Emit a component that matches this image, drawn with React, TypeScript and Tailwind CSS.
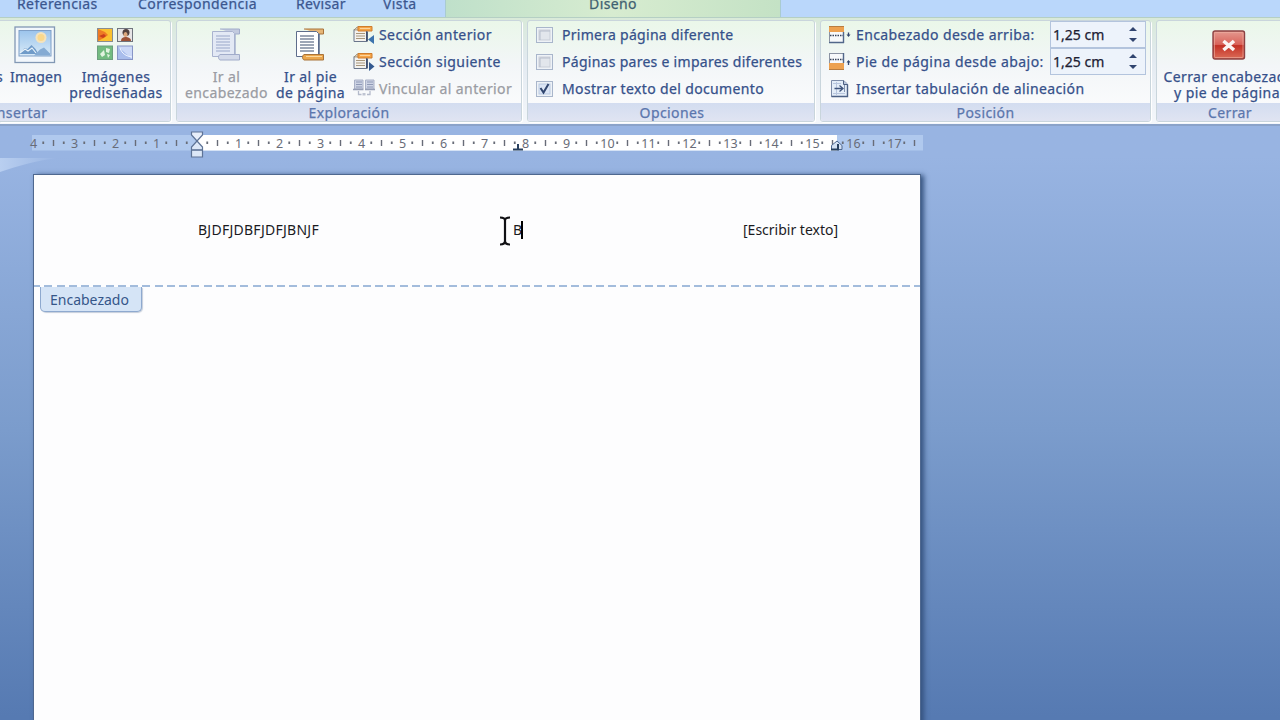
import type { ReactNode } from "react";

const UNIT = 41;
const ORIGIN = 165;

function PictureIcon() {
  return (
    <svg width="42" height="38" viewBox="0 0 42 38" fill="none" className="mr-[2px]">
      <defs>
        <linearGradient id="sky" x1="0" y1="0" x2="0" y2="1">
          <stop offset="0" stopColor="#9cc4ec" />
          <stop offset="1" stopColor="#d9ebf8" />
        </linearGradient>
      </defs>
      <rect x="1" y="1" width="39.5" height="35.5" fill="#f2f7fc" stroke="#8298b4" strokeWidth="1.3" />
      <rect x="5" y="4.5" width="32" height="25.5" fill="url(#sky)" stroke="#7f9fc6" />
      <circle cx="27" cy="11.5" r="5.5" fill="#f4e3bd" />
      <circle cx="27" cy="11.5" r="3.5" fill="#f9d88c" />
      <path d="M5.500 28l5-6 3 1 4-4 4 4 3 5z" fill="#6f9bc9" />
      <path d="M20 29.500l6-6 4-2 3 3 3 3v2z" fill="#85abd3" />
      <path d="M6 27l5-4 3 2 4-3 4 5" stroke="#e8f2fa" strokeWidth="1.200" />
    </svg>
  );
}

function ClipArtIcon() {
  return (
    <svg width="38" height="36" viewBox="0 0 38 36" fill="none" className="mr-[2px]">
      <rect x="1.500" y="1.500" width="15" height="13" fill="#fbc02f" stroke="#8a8d90" />
      <path d="M2 2l7 3 3 3-4 3-6 3z" fill="#ee7b24" />
      <path d="M3 9l5-2 2 2-3 2z" fill="#c93f1c" />
      <rect x="21.500" y="1.500" width="15" height="13" fill="#e7e5e6" stroke="#70757e" />
      <circle cx="30" cy="5.500" r="3.500" fill="#51413e" />
      <ellipse cx="29.500" cy="7.500" rx="2" ry="2.500" fill="#dca77c" />
      <path d="M25 14c0-3 2-4 4.500-4s5.500 1 5.500 4z" fill="#9b5237" />
      <rect x="1.500" y="19" width="15" height="13.500" fill="#73bb80" stroke="#6c9f7d" />
      <path d="M4 27l4-4 1 5-3 2zM10 21l4 1-1 4-3-1zM11 27l3 1-2 3z" fill="#e2f3df" />
      <rect x="21.500" y="19" width="15" height="13.500" fill="#ccd9f7" stroke="#8795c6" />
      <path d="M22 19.500l14 12.500H22z" fill="#a9bdec" />
      <path d="M24 21c2 6 6 8 12 9" stroke="#f0f5ff" />
    </svg>
  );
}

function ScrollIcon({ disabled = false }: { disabled?: boolean }) {
  const paper = disabled ? "#e3e9f5" : "#ffffff";
  const edge = disabled ? "#a9b3cf" : "#5e6d8b";
  const line = disabled ? "#b3bdd8" : "#7d899f";
  const roll = disabled ? "#c3cbdf" : "#eba64c";
  const rollEdge = disabled ? "#a1acca" : "#a8733a";
  return (
    <svg width="32" height="36" viewBox="0 0 32 36" fill="none">
      <path d="M9 2h19.500v5H24" fill={disabled ? roll : "#e6b677"} stroke={rollEdge} />
      <path d="M1.500 4.500h20l2 2v23h-22z" fill={paper} stroke={edge} />
      <path d="M24 7v21" stroke={edge} strokeWidth="1.500" />
      <path d="M5 9h14M5 12h14M5 15h14M5 18h14M5 21h14M5 24h14" stroke={line} strokeWidth="1.300" />
      <path d="M9 27.500h19.500v5.500H9c-2-1-2-4.500 0-5.500z" fill={disabled ? "#d3daea" : roll} stroke={rollEdge} />
      {!disabled && <path d="M11 29.500h16" stroke="#fbd79d" />}
    </svg>
  );
}

function SectionIcon({ direction }: { direction: "prev" | "next" }) {
  return (
    <svg width="22" height="20" viewBox="0 0 22 20" fill="none">
      <path d="M1 4.500h12.500v12H1z" fill="#f4f2ee" stroke="#69758b" />
      <path d="M3 8.500h9M3 11h9M3 13.500h9" stroke="#a8967c" />
      <path d="M1 5l3-3h4v3z" fill="#d8c7ae" stroke="#8c8576" strokeWidth="0.700" />
      <path d="M5 1.500h14v4.500H5z" fill="#f5a548" stroke="#cf7d2d" />
      <path d="M7 3.500h10" stroke="#fcd39b" />
      <path d="M14 6.500v10" stroke="#3f4e6e" strokeWidth="1.800" />
      {direction === "prev" ? (
        <path d="M21 10v9l-6-4.500z" fill="#3c73ad" />
      ) : (
        <path d="M16 10v9l5.500-4.500z" fill="#33598f" />
      )}
    </svg>
  );
}

function LinkIcon() {
  return (
    <svg width="23" height="19" viewBox="0 0 23 19" fill="none">
      <path d="M1.500 1h8.500v9H1.500zM12.500 1H21v9h-8.500z" fill="#cdd3e4" stroke="#a9b0c6" />
      <path d="M3 3h6M3 5.500h6M3 8h6M14 3h6M14 5.500h6M14 8h6" stroke="#8f99b6" />
      <path d="M0 10.500h10.500M12 10.500h10" stroke="#959db5" strokeWidth="1.500" />
      <path d="M5.500 12v3.500h3M17 12v3.500h-3" stroke="#b4bacb" strokeWidth="1.300" />
      <path d="M9.500 14h3v2.500h-3z" fill="#bfc4d2" />
    </svg>
  );
}

function MarginIcon({ edge }: { edge: "top" | "bottom" }) {
  const top = edge === "top";
  return (
    <svg width="23" height="19" viewBox="0 0 23 19" fill="none" className="-ml-px">
      <rect x="0.500" y="1.500" width="14" height="16" fill="#f7f9fb" stroke="#8b93a3" />
      <rect x="0" y={top ? 1 : 11} width="15" height={top ? 6 : 7} fill="#eda150" />
      <path d={top ? "M0 1.500h15" : "M0 17.500h15"} stroke="#b97c3f" />
      <path d={top ? "M1 10.500h13" : "M1 7.500h13"} stroke="#38445b" strokeWidth="1.400" strokeDasharray="1.500 1" />
      <path d={top ? "M0 17.500h15M14.500 7v11" : "M14.500 1v10"} stroke="#52678a" strokeWidth="1.400" />
      <path d={top ? "M0.500 7v10" : "M0.500 1v10"} stroke="#8b93a3" />
      <path d={top ? "M19.500 7.500v3" : "M19.500 9v4"} stroke="#33476e" strokeWidth="1.300" />
      <path d={top ? "M17.500 9.500h4l-2 2.500z" : "M17.500 10.500h4l-2-2.500z"} fill="#33476e" />
    </svg>
  );
}

function AlignTabIcon() {
  return (
    <svg width="19" height="19" viewBox="0 0 19 19" fill="none">
      <path d="M1.500 1.500h12l4 3.500v12.500h-16z" fill="#e4edf8" stroke="#7d8ca8" />
      <path d="M13.500 1.500v4h4" fill="#b8c6dd" stroke="#4d5f80" />
      <path d="M1.500 17.500h16v-12" stroke="#4c6185" strokeWidth="1.400" />
      <path d="M3 4.500h8M3 14.500h12M6.500 3v13" stroke="#b8c6de" />
      <path d="M4.500 9.500h8M9.500 6.500l3.500 3-3.500 3" stroke="#3f547c" strokeWidth="1.300" />
      <path d="M14.500 6v7" stroke="#8494b0" />
    </svg>
  );
}

function CloseIcon() {
  return (
    <svg width="34" height="30" viewBox="0 0 34 30" fill="none">
      <defs>
        <linearGradient id="closeRed" x1="0" y1="0" x2="0" y2="1">
          <stop offset="0" stopColor="#e59a90" />
          <stop offset="0.480" stopColor="#d9635a" />
          <stop offset="0.520" stopColor="#c33126" />
          <stop offset="1" stopColor="#dc6d58" />
        </linearGradient>
      </defs>
      <rect x="1" y="1" width="31.500" height="28" rx="2" fill="url(#closeRed)" stroke="#8c4142" strokeWidth="1.400" />
      <rect x="2.500" y="2.500" width="28.500" height="25" rx="1" stroke="#eeb0a4" strokeOpacity="0.600" />
      <path d="M11.500 11l10.500 9M22 11l-10.500 9" stroke="#fbf4f3" strokeWidth="3.600" />
    </svg>
  );
}

function Group({ title, className, children }: { title: string; className: string; children: ReactNode }) {
  return (
    <section
      className={`flex h-[102px] shrink-0 flex-col overflow-hidden rounded-[3px] border border-[#c9d5dc] bg-linear-to-b from-[#eaf7e9] via-[#f3f6f8] via-45% to-[#fdfdfe] shadow-[1px_1px_0_#fff] ${className}`}
    >
      <div className="flex h-[82px] shrink-0">{children}</div>
      <h2 className="flex h-[18px] items-center justify-center bg-linear-to-b from-[#d3ddf0] to-[#e0e4f2] text-[14px] tracking-[0.4px] text-[#5b76ad]">
        {title}
      </h2>
    </section>
  );
}

function BigButton({ icon, lines, className }: { icon: ReactNode; lines: string[]; className: string }) {
  return (
    <button className={`flex shrink-0 flex-col items-center whitespace-nowrap text-[14px] leading-4 ${className}`}>
      <span className="flex h-12 w-full items-center justify-center">{icon}</span>
      {lines.map((line) => (
        <span key={line}>{line}</span>
      ))}
    </button>
  );
}

function SmallButton({ icon, label, className }: { icon: ReactNode; label: string; className: string }) {
  return (
    <button className={`flex h-[27px] items-center whitespace-nowrap text-[14px] ${className}`}>
      <span className="flex w-[26px] shrink-0">{icon}</span>
      {label}
    </button>
  );
}

function Option({ label, checked, className }: { label: string; checked?: boolean; className: string }) {
  return (
    <label className={`flex h-[27px] items-center gap-[9px] whitespace-nowrap text-[14px] ${className}`}>
      <svg width="17" height="16" viewBox="0 0 17 16" fill="none">
        <rect x="0.500" y="0.500" width="16" height="15" fill="#eef2f7" stroke="#a9b6cb" />
        <rect x="3" y="3" width="11" height="10" fill={checked ? "#dbe5f5" : "#e2e6ec"} stroke={checked ? "#b9c9e2" : "#c9ced8"} />
        <path d="M4 13V4h10" stroke={checked ? "none" : "#b6bdcb"} />
        {checked && <path d="M4.500 7l3 4.500 5-8.500" stroke="#31466f" strokeWidth="2" />}
      </svg>
      {label}
    </label>
  );
}

function Spinner({ value }: { value: string }) {
  return (
    <div className="flex h-[27px] w-[96px] items-center justify-between border border-[#b3c4dd] bg-[#edf3fb] pr-[7px] pl-[2px] text-[14px] text-[#202033]">
      {value}
      <svg width="10" height="17" viewBox="0 0 10 17" fill="#30446f">
        <path d="M1 5l4-4 4 4zM1 12l4 4 4-4z" />
      </svg>
    </div>
  );
}

function Ribbon() {
  return (
    <div className="flex h-[109px] shrink-0 gap-[5px] border-t border-b-2 border-t-[#b5cfc4] border-b-[#8ba3c9] bg-linear-to-b from-[#d9ead9] via-[#e3eaf1] via-40% to-[#f4f7fb] pt-[2px] text-[#35508a] [-webkit-text-stroke:0.25px]">
      <Group title="Insertar" className="w-[171px] rounded-l-none border-l-0 [&>h2]:pr-[131px]">
        <span className="w-[9px] pt-12 text-[14px] leading-4 -indent-1">s</span>
        <BigButton icon={<PictureIcon />} lines={["Imagen"]} className="w-[54px] tracking-[0.2px]" />
        <BigButton icon={<ClipArtIcon />} lines={["Imágenes", "prediseñadas"]} className="w-[106px] tracking-[0.4px]" />
      </Group>
      <Group title="Exploración" className="w-[346px]">
        <BigButton
          icon={<ScrollIcon disabled />}
          lines={["Ir al", "encabezado"]}
          className="w-[99px] tracking-[0.4px] text-[#9a9ca3]"
        />
        <BigButton icon={<ScrollIcon />} lines={["Ir al pie", "de página"]} className="w-[69px] tracking-[0.4px]" />
        <div className="ml-[8px] flex flex-col">
          <SmallButton icon={<SectionIcon direction="prev" />} label="Sección anterior" className="tracking-[0.4px]" />
          <SmallButton icon={<SectionIcon direction="next" />} label="Sección siguiente" className="tracking-[0.45px]" />
          <SmallButton icon={<LinkIcon />} label="Vincular al anterior" className="tracking-[0.4px] text-[#9a9ca3]" />
        </div>
      </Group>
      <Group title="Opciones" className="w-[288px] [&>h2]:pl-[2px]">
        <div className="ml-[8px] flex flex-col">
          <Option label="Primera página diferente" className="tracking-[0.28px]" />
          <Option label="Páginas pares e impares diferentes" className="tracking-[0.28px]" />
          <Option label="Mostrar texto del documento" checked className="tracking-[0.36px]" />
        </div>
      </Group>
      <Group title="Posición" className="w-[331px]">
        <div className="ml-[9px] flex flex-col">
          <div className="flex">
            <SmallButton icon={<MarginIcon edge="top" />} label="Encabezado desde arriba:" className="w-[220px] tracking-[0.4px]" />
            <Spinner value="1,25 cm" />
          </div>
          <div className="flex">
            <SmallButton icon={<MarginIcon edge="bottom" />} label="Pie de página desde abajo:" className="w-[220px] tracking-[0.45px]" />
            <Spinner value="1,25 cm" />
          </div>
          <SmallButton icon={<AlignTabIcon />} label="Insertar tabulación de alineación" className="tracking-[0.38px]" />
        </div>
      </Group>
      <Group title="Cerrar" className="w-[146px] [&>h2]:pl-[2px]">
        <BigButton
          icon={<CloseIcon />}
          lines={["Cerrar encabezado", "y pie de página"]}
          className="w-[144px] tracking-[0.4px] [&>span:last-child]:-ml-1"
        />
      </Group>
    </div>
  );
}

function Ruler() {
  const marks: ReactNode[] = [];
  for (let q = -16; q <= 70; q++) {
    const x = ORIGIN + (q * UNIT) / 4;
    if (q === 0) continue;
    if (q % 4 === 0) {
      marks.push(
        <text key={q} x={x + 0.5} y="13.500" fontSize="12.500" textAnchor="middle" fill="#686c78">
          {Math.abs(q / 4)}
        </text>
      );
    } else if (q % 2 === 0) {
      marks.push(<path key={q} d={`M${x} 6v6`} stroke="#686c78" strokeWidth="1.400" />);
    } else {
      marks.push(<path key={q} d={`M${x} 7.500v2.500`} stroke="#686c78" strokeWidth="1.800" />);
    }
  }
  return (
    <svg width="892" height="30" viewBox="0 0 892 30" className="ml-8 shrink-0 overflow-visible" fontFamily="Noto Sans, sans-serif">
      <rect y="1" width="891" height="15.500" fill="#b0c9ee" />
      <rect x="165" y="1" width="672" height="15.500" fill="#b0c9ee" />
      <rect x="165" y="1" width="640" height="15.500" fill="#fff" />
      {marks}
      {/* indent markers */}
      <path d="M159.500-2h11v3l-5.500 6-5.500-6z" fill="#e7eefa" stroke="#5e7396" strokeWidth="1.200" />
      <path d="M165 7l5.500 6v10h-11V13z" fill="#dce7f7" stroke="#5e7396" strokeWidth="1.200" />
      <path d="M159.500 16h11" stroke="#5e7396" strokeWidth="1.600" />
      {/* tab stops */}
      <path d="M481 15.500h10M486 10v5" stroke="#28405f" strokeWidth="2" />
      <path d="M799.500 15.500v-4l5.500-4.500 5 4.500v4z" fill="#d3e0f2" stroke="#4e6890" />
      <path d="M799 15.500h8M806 10v5" stroke="#28405f" strokeWidth="2" />
    </svg>
  );
}

function Page() {
  return (
    <div className="ml-[33px] h-[560px] w-[888px] shrink-0 border border-b-0 border-[#4f688f] bg-[#fdfdfe] shadow-[3px_1px_5px_#35537f]">
      <header className="flex h-[112px] items-start border-b-2 border-transparent pt-[45px] text-[14px] leading-[20px] text-[#1b1b1f] [border-image:repeating-linear-gradient(90deg,#a3bcdc_0_8px,#fdfdfe_8px_12.200px)_2]">
        <span className="ml-[164px] w-[299px] tracking-[0.26px]">BJDFJDBFJDFJBNJF</span>
        {/* I-beam pointer next to the caret */}
        <svg width="16" height="32" viewBox="0 0 16 32" fill="none" className="-mt-[5px]">
          <path d="M3 2.500c3 0 5 .5 5 3 0-2.500 2-3 5-3M8 5v21M3 29.500c3 0 5-.5 5-3.500 0 3 2 3.500 5 3.500" stroke="#101014" strokeWidth="2.200" />
        </svg>
        <span className="flex w-[230px] items-center">
          B
          <span className="-ml-px h-[18px] w-[2px] bg-black" />
        </span>
        <span>[Escribir texto]</span>
      </header>
      <div className="ml-[6px] flex h-[25px] w-[102px] items-center rounded-b-[5px] border border-t-0 border-[#8ea9cf] bg-[#d5e4f6] pl-[9px] text-[14px] text-[#355689] shadow-[1px_1px_1px_#c5cedb]">
        Encabezado
      </div>
    </div>
  );
}

export default function App() {
  return (
    <div className="flex h-[720px] w-[1280px] flex-col overflow-hidden bg-[#5a7cb3] font-['Noto_Sans','Open_Sans',sans-serif]">
      <nav className="flex h-[17px] shrink-0 items-start overflow-hidden bg-[#bad7fb] text-[14px] leading-[20px] text-[#3b568f] [-webkit-text-stroke:0.25px]">
        <span className="-mt-[6px] ml-[17px] w-[121px] tracking-[0.4px]">Referencias</span>
        <span className="-mt-[6px] w-[158px] tracking-[0.45px]">Correspondencia</span>
        <span className="-mt-[6px] w-[87px] tracking-[0.35px]">Revisar</span>
        <span className="-mt-[6px] w-[62px] tracking-[0.4px]">Vista</span>
        <span className="flex h-[17px] w-[336px] justify-center border-x border-[#a9cbd0] bg-linear-to-r from-[#bfe0ca] via-[#d7ecd0] to-[#c4e2c5]">
          <span className="-mt-[6px] tracking-[0.4px] text-[#3f6070]">Diseño</span>
        </span>
      </nav>
      <Ribbon />
      <main className="flex grow flex-col bg-linear-to-b from-[#98b4e2] from-5% via-[#7b9ccc] via-50% to-[#567ab2] to-97% pt-[8px]">
        <Ruler />
        <div className="flex h-[10px] shrink-0">
          <svg width="70" height="16" viewBox="0 0 70 16" className="-mt-1 overflow-visible">
            <defs>
              <linearGradient id="swoosh" x1="0" y1="0" x2="1" y2="0">
                <stop offset="0" stopColor="#b9cff0" />
                <stop offset="1" stopColor="#98b4e2" />
              </linearGradient>
            </defs>
            <path d="M0-2h58C38 0 18 6 0 12z" fill="url(#swoosh)" />
          </svg>
        </div>
        <Page />
      </main>
    </div>
  );
}
